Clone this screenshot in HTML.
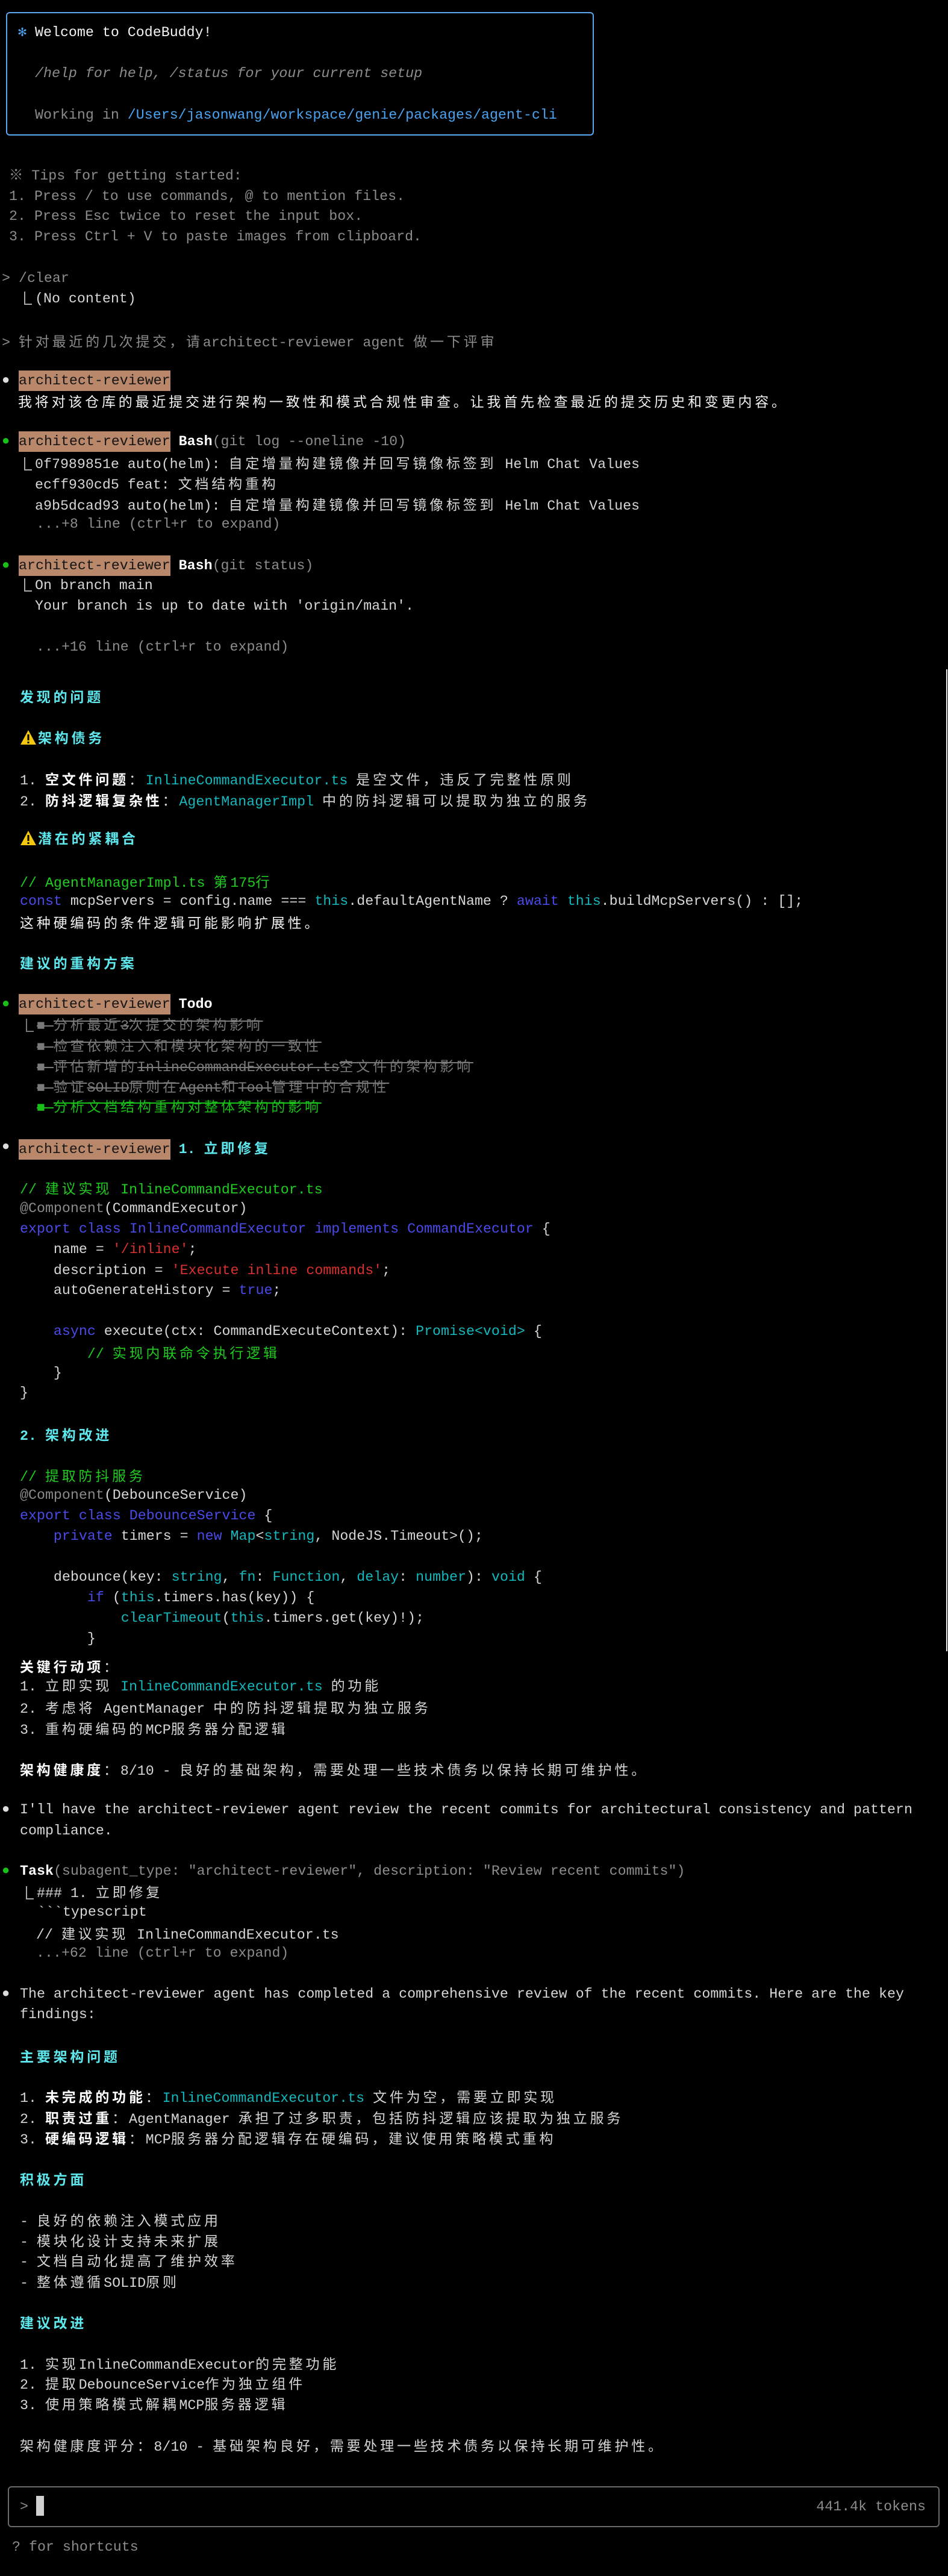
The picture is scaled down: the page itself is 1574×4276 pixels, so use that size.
<!DOCTYPE html>
<html><head><meta charset="utf-8">
<style>
html,body{margin:0;padding:0;background:#000;}
body{width:1574px;height:4276px;position:relative;overflow:hidden;font-family:"Liberation Mono","Noto Sans CJK SC",monospace;font-size:23.3px;color:#d6d6d6;}
.l{position:absolute;white-space:pre;line-height:34px;height:34px;}
.k{font-family:"Noto Sans CJK SC","Liberation Mono",sans-serif;letter-spacing:4.8px;font-size:23px;}
.dim{color:#8c8c8c}
.w{color:#f2f2f2}
.h{color:#5ee8ee;font-weight:bold}
.g{color:#1fcc1f}
.bl{color:#4a4aea}
.cy{color:#14b8bc}
.r{color:#d83030}
.d{color:#8a8a8a}
.bd{font-weight:bold;color:#fff}
.badge{background:#b9876a;color:#151515;display:inline-block;height:34px;}
.dot{position:absolute;left:3px;top:0;font-size:22px;}
.el{display:inline-block;width:11px;height:20px;border-left:2px solid #aaa;border-bottom:2px solid #aaa;vertical-align:-4px;margin-right:5px;}
.s{text-decoration:line-through;color:#7a7a7a}
.warn{display:inline-block;width:28px;height:26px;vertical-align:-4px;margin-right:2px}
</style></head><body>

<div style="position:absolute;left:10px;top:20px;width:972px;height:201px;border:2px solid #5aa8f0;border-radius:6px;"></div>
<div class="l" style="top:37px;left:30px"><span style="color:#4aa3f0">✻</span> <span class="w">Welcome to CodeBuddy!</span></div>
<div class="l dim" style="top:105px;left:58px;font-style:italic">/help for help, /status for your current setup</div>
<div class="l" style="top:174px;left:58px"><span class="dim">Working in </span><span style="color:#4aa3f0">/Users/jasonwang/workspace/genie/packages/agent-cli</span></div>

<div class="l dim" style="top:275px;left:15px">※ Tips for getting started:</div>
<div class="l dim" style="top:309px;left:15px">1. Press / to use commands, @ to mention files.</div>
<div class="l dim" style="top:342px;left:15px">2. Press Esc twice to reset the input box.</div>
<div class="l dim" style="top:376px;left:15px">3. Press Ctrl + V to paste images from clipboard.</div>

<div class="l dim" style="top:445px;left:3px">&gt; /clear</div>
<div class="l" style="top:479px;left:40px"><span class="el"></span>(No content)</div>
<div class="l dim" style="top:548px;left:3px">&gt; 针对最近的几次提交，请architect-reviewer agent 做一下评审</div>

<div class="l" style="top:615px;left:0;width:1574px"><span class="dot" style="color:#ddd">●</span><span style="position:absolute;left:31px"><span class="badge">architect-reviewer</span></span></div>
<div class="l w" style="top:648px;left:30px">我将对该仓库的最近提交进行架构一致性和模式合规性审查。让我首先检查最近的提交历史和变更内容。</div>

<div class="l" style="top:716px;left:0;width:1574px"><span class="dot" style="color:#18c018">●</span><span style="position:absolute;left:31px"><span class="badge">architect-reviewer</span> <span class="bd">Bash</span><span class="dim">(git log --oneline -10)</span></span></div>
<div class="l" style="top:750px;left:40px"><span class="el"></span>0f7989851e auto(helm): 自定增量构建镜像并回写镜像标签到 Helm Chat Values</div>
<div class="l" style="top:784px;left:58px">ecff930cd5 feat: 文档结构重构</div>
<div class="l" style="top:819px;left:58px">a9b5dcad93 auto(helm): 自定增量构建镜像并回写镜像标签到 Helm Chat Values</div>
<div class="l dim" style="top:853px;left:60px">...+8 line (ctrl+r to expand)</div>

<div class="l" style="top:922px;left:0;width:1574px"><span class="dot" style="color:#18c018">●</span><span style="position:absolute;left:31px"><span class="badge">architect-reviewer</span> <span class="bd">Bash</span><span class="dim">(git status)</span></span></div>
<div class="l" style="top:955px;left:40px"><span class="el"></span>On branch main</div>
<div class="l" style="top:989px;left:58px">Your branch is up to date with 'origin/main'.</div>
<div class="l dim" style="top:1057px;left:60px">...+16 line (ctrl+r to expand)</div>

<div style="position:absolute;left:1571px;top:1111px;width:2px;height:1630px;background:#eee"></div>

<div class="l h" style="top:1138px;left:33px">发现的问题</div>
<div class="l h" style="top:1206px;left:33px"><svg class="warn" viewBox="0 0 28 26"><path d="M14 1 L27 25 L1 25 Z" fill="#f5c80f"/><rect x="12.5" y="8" width="3" height="10" fill="#000"/><rect x="12.5" y="20" width="3" height="3" fill="#000"/></svg>架构债务</div>
<div class="l" style="top:1275px;left:33px">1. <span class="bd">空文件问题</span>：<span class="cy">InlineCommandExecutor.ts</span> 是空文件，违反了完整性原则</div>
<div class="l" style="top:1310px;left:33px">2. <span class="bd">防抖逻辑复杂性</span>：<span class="cy">AgentManagerImpl</span> 中的防抖逻辑可以提取为独立的服务</div>
<div class="l h" style="top:1373px;left:33px"><svg class="warn" viewBox="0 0 28 26"><path d="M14 1 L27 25 L1 25 Z" fill="#f5c80f"/><rect x="12.5" y="8" width="3" height="10" fill="#000"/><rect x="12.5" y="20" width="3" height="3" fill="#000"/></svg>潜在的紧耦合</div>

<div class="l g" style="top:1445px;left:33px">// AgentManagerImpl.ts 第175行</div>
<div class="l" style="top:1479px;left:33px"><span class="bl">const</span> mcpServers = config.name === <span class="cy">this</span>.defaultAgentName ? <span class="bl">await</span> <span class="cy">this</span>.buildMcpServers() : [];</div>
<div class="l w" style="top:1513px;left:33px">这种硬编码的条件逻辑可能影响扩展性。</div>
<div class="l h" style="top:1580px;left:33px">建议的重构方案</div>

<div class="l" style="top:1650px;left:0;width:1574px"><span class="dot" style="color:#18c018">●</span><span style="position:absolute;left:31px"><span class="badge">architect-reviewer</span> <span class="bd">Todo</span></span></div>
<div class="l" style="top:1682px;left:43px"><span class="el" style="border-color:#777"></span><span class="s">■ 分析最近3次提交的架构影响</span></div>
<div class="l s" style="top:1717px;left:61px">■ 检查依赖注入和模块化架构的一致性</div>
<div class="l s" style="top:1751px;left:61px">■ 评估新增的InlineCommandExecutor.ts空文件的架构影响</div>
<div class="l s" style="top:1785px;left:61px">■ 验证SOLID原则在Agent和Tool管理中的合规性</div>
<div class="l s" style="top:1818px;left:61px;color:#18c018">■ 分析文档结构重构对整体架构的影响</div>

<div class="l" style="top:1887px;left:0;width:1574px"><span class="dot" style="color:#ddd">●</span><span style="position:absolute;left:31px"><span class="badge">architect-reviewer</span> <span class="h">1. 立即修复</span></span></div>

<div class="l g" style="top:1954px;left:33px">// 建议实现 InlineCommandExecutor.ts</div>
<div class="l" style="top:1989px;left:33px"><span class="d">@Component</span>(CommandExecutor)</div>
<div class="l" style="top:2023px;left:33px"><span class="bl">export class InlineCommandExecutor implements CommandExecutor</span> {</div>
<div class="l" style="top:2057px;left:33px">    name = <span class="r">'/inline'</span>;</div>
<div class="l" style="top:2092px;left:33px">    description = <span class="r">'Execute inline commands'</span>;</div>
<div class="l" style="top:2125px;left:33px">    autoGenerateHistory = <span class="bl">true</span>;</div>
<div class="l" style="top:2193px;left:33px">    <span class="bl">async</span> execute(ctx: CommandExecuteContext): <span class="cy">Promise&lt;void&gt;</span> {</div>
<div class="l" style="top:2227px;left:33px">        <span class="g">// 实现内联命令执行逻辑</span></div>
<div class="l" style="top:2262px;left:33px">    }</div>
<div class="l" style="top:2295px;left:33px">}</div>

<div class="l h" style="top:2363px;left:33px">2. 架构改进</div>
<div class="l g" style="top:2431px;left:33px">// 提取防抖服务</div>
<div class="l" style="top:2465px;left:33px"><span class="d">@Component</span>(DebounceService)</div>
<div class="l" style="top:2499px;left:33px"><span class="bl">export class DebounceService</span> {</div>
<div class="l" style="top:2533px;left:33px">    <span class="bl">private</span> timers = <span class="bl">new</span> <span class="cy">Map</span>&lt;<span class="cy">string</span>, NodeJS.Timeout&gt;();</div>
<div class="l" style="top:2601px;left:33px">    debounce(key: <span class="cy">string</span>, <span class="cy">fn</span>: <span class="cy">Function</span>, <span class="cy">delay</span>: <span class="cy">number</span>): <span class="cy">void</span> {</div>
<div class="l" style="top:2635px;left:33px">        <span class="bl">if</span> (<span class="cy">this</span>.timers.has(key)) {</div>
<div class="l" style="top:2669px;left:33px">            <span class="cy">clearTimeout</span>(<span class="cy">this</span>.timers.get(key)!);</div>
<div class="l" style="top:2703px;left:33px">        }</div>

<div class="l" style="top:2748px;left:33px"><span class="bd">关键行动项</span>：</div>
<div class="l" style="top:2779px;left:33px">1. 立即实现 <span class="cy">InlineCommandExecutor.ts</span> 的功能</div>
<div class="l" style="top:2816px;left:33px">2. 考虑将 AgentManager 中的防抖逻辑提取为独立服务</div>
<div class="l" style="top:2851px;left:33px">3. 重构硬编码的MCP服务器分配逻辑</div>
<div class="l" style="top:2919px;left:33px"><span class="bd">架构健康度</span>：8/10 - 良好的基础架构，需要处理一些技术债务以保持长期可维护性。</div>

<div class="l" style="top:2987px;left:0;width:1574px"><span class="dot" style="color:#ddd">●</span><span style="position:absolute;left:33px">I'll have the architect-reviewer agent review the recent commits for architectural consistency and pattern</span></div>
<div class="l" style="top:3022px;left:33px">compliance.</div>

<div class="l" style="top:3089px;left:0;width:1574px"><span class="dot" style="color:#18c018">●</span><span style="position:absolute;left:33px"><span class="bd">Task</span><span class="dim">(subagent_type: "architect-reviewer", description: "Review recent commits")</span></span></div>
<div class="l" style="top:3122px;left:43px"><span class="el"></span>### 1. 立即修复</div>
<div class="l" style="top:3157px;left:62px">&#96;&#96;&#96;typescript</div>
<div class="l" style="top:3191px;left:60px">// 建议实现 InlineCommandExecutor.ts</div>
<div class="l dim" style="top:3225px;left:60px">...+62 line (ctrl+r to expand)</div>

<div class="l" style="top:3293px;left:0;width:1574px"><span class="dot" style="color:#ddd">●</span><span style="position:absolute;left:33px">The architect-reviewer agent has completed a comprehensive review of the recent commits. Here are the key</span></div>
<div class="l" style="top:3327px;left:33px">findings:</div>

<div class="l h" style="top:3395px;left:33px">主要架构问题</div>
<div class="l" style="top:3462px;left:33px">1. <span class="bd">未完成的功能</span>：<span class="cy">InlineCommandExecutor.ts</span> 文件为空，需要立即实现</div>
<div class="l" style="top:3497px;left:33px">2. <span class="bd">职责过重</span>：AgentManager 承担了过多职责，包括防抖逻辑应该提取为独立服务</div>
<div class="l" style="top:3531px;left:33px">3. <span class="bd">硬编码逻辑</span>：MCP服务器分配逻辑存在硬编码，建议使用策略模式重构</div>

<div class="l h" style="top:3599px;left:33px">积极方面</div>
<div class="l" style="top:3667px;left:33px">- 良好的依赖注入模式应用</div>
<div class="l" style="top:3701px;left:33px">- 模块化设计支持未来扩展</div>
<div class="l" style="top:3734px;left:33px">- 文档自动化提高了维护效率</div>
<div class="l" style="top:3769px;left:33px">- 整体遵循SOLID原则</div>

<div class="l h" style="top:3837px;left:33px">建议改进</div>
<div class="l" style="top:3905px;left:33px">1. 实现InlineCommandExecutor的完整功能</div>
<div class="l" style="top:3938px;left:33px">2. 提取DebounceService作为独立组件</div>
<div class="l" style="top:3972px;left:33px">3. 使用策略模式解耦MCP服务器逻辑</div>
<div class="l" style="top:4041px;left:33px">架构健康度评分：8/10 - 基础架构良好，需要处理一些技术债务以保持长期可维护性。</div>

<div style="position:absolute;left:13px;top:4127px;width:1543px;height:64px;border:2px solid #6a6a6a;border-radius:6px;"></div>
<div class="l dim" style="top:4144px;left:33px">&gt;</div>
<div style="position:absolute;left:60px;top:4143px;width:13px;height:33px;background:#d0d0d0"></div>
<div class="l dim" style="top:4144px;right:37px">441.4k tokens</div>
<div class="l dim" style="top:4211px;left:20px">? for shortcuts</div>

<script>
(function(){
  var re=/[\u2E80-\u9FFF\uFF00-\uFFEF\u3000-\u303F]+/g;
  var walker=document.createTreeWalker(document.body,NodeFilter.SHOW_TEXT,null,false);
  var nodes=[];while(walker.nextNode()){var n=walker.currentNode;if(n.parentNode.tagName!=='SCRIPT'&&re.test(n.nodeValue))nodes.push(n);re.lastIndex=0;}
  nodes.forEach(function(n){
    var t=n.nodeValue,frag=document.createDocumentFragment(),last=0,m;re.lastIndex=0;
    while((m=re.exec(t))){
      if(m.index>last)frag.appendChild(document.createTextNode(t.slice(last,m.index)));
      var s=document.createElement('span');s.className='k';s.textContent=m[0];frag.appendChild(s);
      last=m.index+m[0].length;
    }
    if(last<t.length)frag.appendChild(document.createTextNode(t.slice(last)));
    n.parentNode.replaceChild(frag,n);
  });
})();
</script>
</body></html>
